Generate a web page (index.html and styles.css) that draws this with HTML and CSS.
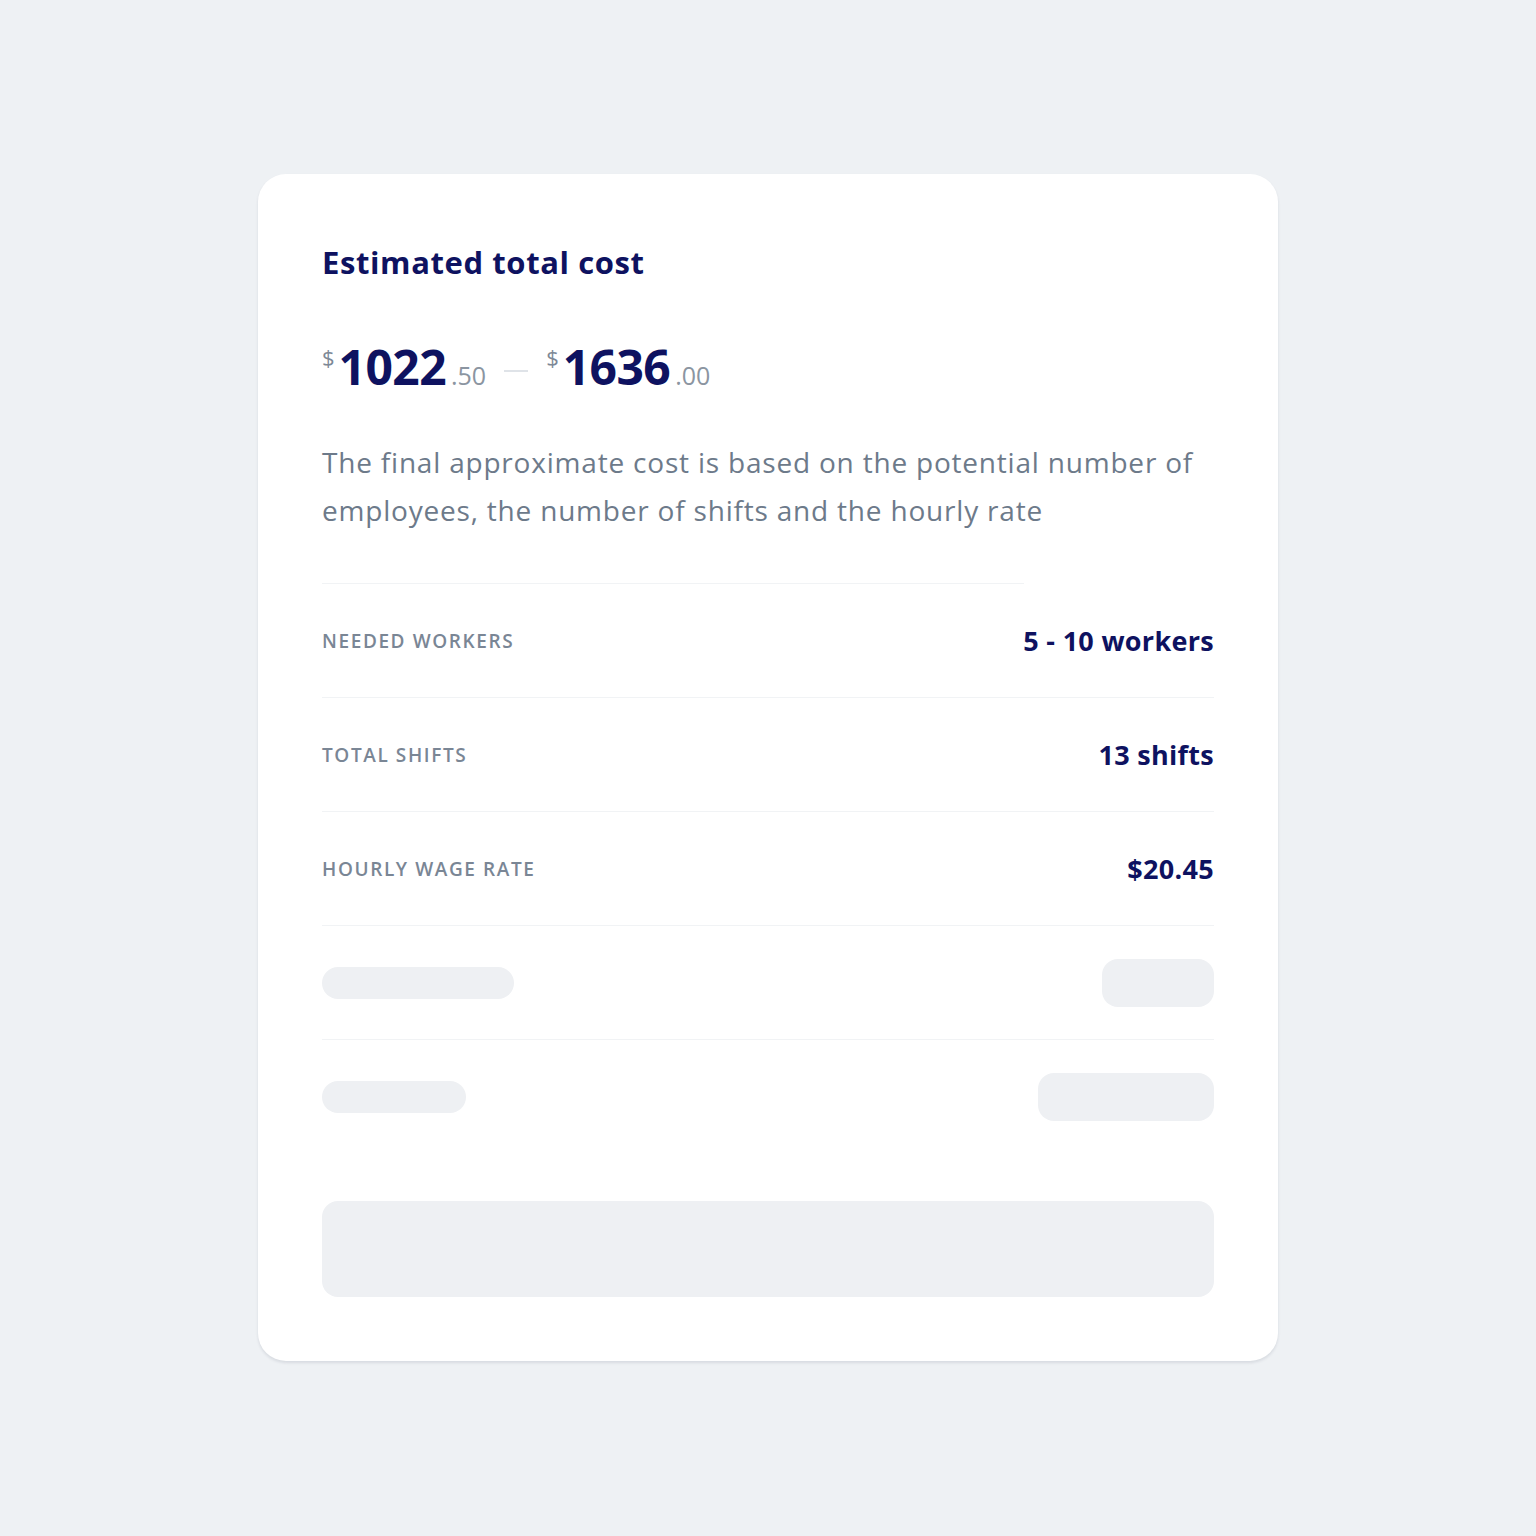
FILE: index.html
```html
<!DOCTYPE html>
<html>
<head>
<meta charset="utf-8">
<link rel="stylesheet" href="styles.css">
</head>
<body>
<div class="page">
  <div class="card">
    <h1 class="title">Estimated total cost</h1>
    <div class="price">
      <span class="amount"><span class="cur">$</span><span class="int">1022</span><span class="dec">.50</span></span>
      <span class="dash"></span>
      <span class="amount"><span class="cur">$</span><span class="int">1636</span><span class="dec">.00</span></span>
    </div>
    <p class="desc">The final approximate cost is based on the potential number of employees, the number of shifts and the hourly rate</p>
    <div class="divider"></div>
    <div class="row">
      <span class="label">Needed workers</span>
      <span class="value">5 - 10 workers</span>
    </div>
    <div class="row">
      <span class="label">Total shifts</span>
      <span class="value">13 shifts</span>
    </div>
    <div class="row">
      <span class="label">Hourly wage rate</span>
      <span class="value">$20.45</span>
    </div>
    <div class="row">
      <span class="skel skel-l1"></span>
      <span class="skel skel-r1"></span>
    </div>
    <div class="row row-last">
      <span class="skel skel-l2"></span>
      <span class="skel skel-r2"></span>
    </div>
    <div class="skel skel-btn"></div>
  </div>
</div>
</body>
</html>
```

FILE: styles.css
```css
* { box-sizing: border-box; }
html, body { margin: 0; padding: 0; }
body {
  background: #eef1f4;
  font-family: "Open Sans", "Noto Sans", sans-serif;
}
.page {
  width: 1536px;
  height: 1536px;
  padding-top: 174px;
  display: flex;
  justify-content: center;
  align-items: flex-start;
}
.card {
  width: 1020px;
  background: #ffffff;
  border-radius: 28px;
  padding: 64px;
  box-shadow: 0 2px 3px rgba(20, 30, 60, 0.10);
  display: flex;
  flex-direction: column;
}
.title {
  margin: 0;
  font-size: 31px;
  line-height: 48px;
  font-weight: 700;
  color: #0e1260;
  letter-spacing: 0.6px;
}
.price {
  margin-top: 49px;
  height: 64px;
  display: flex;
  align-items: center;
  gap: 18px;
}
.amount {
  display: flex;
  align-items: baseline;
  color: #0e1260;
}
.cur {
  font-size: 22px;
  color: #7d8896;
  align-self: flex-start;
  margin-top: 6px;
  margin-right: 4px;
  line-height: 32px;
}
.int {
  font-size: 48px;
  font-weight: 700;
  line-height: 64px;
  letter-spacing: -0.6px;
}
.dec {
  font-size: 25px;
  color: #8b95a1;
  margin-left: 5px;
}
.dash {
  width: 24px;
  height: 2px;
  background: #dfe3e8;
  margin-top: 8px;
}
.desc {
  margin: 39px 0 0 0;
  font-size: 28px;
  line-height: 48px;
  color: #6d7a8a;
  font-weight: 400;
  letter-spacing: 0.8px;
}
.divider {
  margin-top: 49px;
  width: 702px;
  height: 1px;
  background: #f1f3f5;
}
.row {
  height: 114px;
  border-bottom: 1px solid #f1f3f5;
  display: flex;
  align-items: center;
  justify-content: space-between;
}
.row-last { border-bottom: none; }
.label {
  text-transform: uppercase;
  font-size: 19px;
  font-weight: 600;
  letter-spacing: 1.6px;
  color: #7a8695;
}
.value {
  font-size: 27px;
  font-weight: 700;
  color: #0e1260;
  letter-spacing: 0.3px;
}
.skel {
  display: block;
  background: #eef0f3;
  border-radius: 16px;
}
.skel-l1 { width: 192px; height: 32px; }
.skel-r1 { width: 112px; height: 48px; }
.skel-l2 { width: 144px; height: 32px; }
.skel-r2 { width: 176px; height: 48px; }
.skel-btn {
  margin-top: 47px;
  width: 100%;
  height: 96px;
}
```
